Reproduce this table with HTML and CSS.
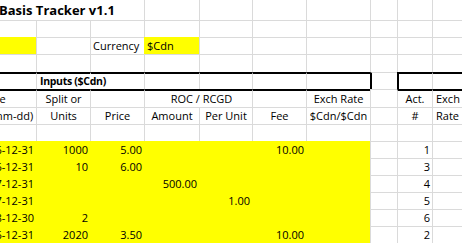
FILE: index.html
```html
<!DOCTYPE html>
<html lang="en">
<head>
<meta charset="utf-8">
<title>Basis Tracker v1.1</title>
<link rel="stylesheet" href="styles.css">
</head>
<body>
<div class="sheet">
  <div class="row h20 first">
    <div class="c title">Basis Tracker v1.1</div>
    <div class="c nl"></div><div class="c nl"></div><div class="c"></div><div class="c"></div><div class="c"></div><div class="c"></div><div class="c"></div><div class="c"></div><div class="c"></div>
  </div>
  <div class="row h17">
    <div class="c"></div><div class="c"></div><div class="c"></div><div class="c"></div><div class="c"></div><div class="c"></div><div class="c"></div><div class="c"></div><div class="c"></div><div class="c"></div>
  </div>
  <div class="row h17">
    <div class="c y"></div><div class="c"></div><div class="c">Currency</div><div class="c y">$Cdn</div><div class="c"></div><div class="c"></div><div class="c"></div><div class="c"></div><div class="c"></div><div class="c"></div>
  </div>
  <div class="row h18">
    <div class="c"></div><div class="c"></div><div class="c"></div><div class="c"></div><div class="c"></div><div class="c"></div><div class="c"></div><div class="c"></div><div class="c"></div><div class="c"></div>
  </div>
  <div class="row h17">
    <div class="c bt"></div><div class="c bt b">Inputs ($Cdn)</div><div class="c bt nl"></div><div class="c bt"></div><div class="c bt"></div><div class="c bt"></div><div class="c bt"></div><div class="c bl"></div><div class="c bt bl"></div><div class="c bt"></div>
  </div>
  <div class="row h18">
    <div class="c bt ctr date">Date</div><div class="c bt ctr">Split or</div><div class="c bt"></div><div class="c bt ctr span2 roc">ROC / RCGD</div><div class="c bt"></div><div class="c bt ctr">Exch Rate</div><div class="c"></div><div class="c bt ctr">Act.</div><div class="c bt jl">Exch Rate</div>
  </div>
  <div class="row h17">
    <div class="c ctr">(yyyy-mm-dd)</div><div class="c ctr">Units</div><div class="c ctr">Price</div><div class="c ctr">Amount</div><div class="c ctr">Per Unit</div><div class="c ctr">Fee</div><div class="c ctr">$Cdn/$Cdn</div><div class="c"></div><div class="c ctr">#</div><div class="c jl">Rate</div>
  </div>
  <div class="row h17">
    <div class="c"></div><div class="c"></div><div class="c"></div><div class="c"></div><div class="c"></div><div class="c"></div><div class="c"></div><div class="c"></div><div class="c"></div><div class="c"></div>
  </div>
  <div class="row h17">
    <div class="c y r">2016-12-31</div><div class="c y r">1000</div><div class="c y r">5.00</div><div class="c y r"></div><div class="c y r"></div><div class="c y r">10.00</div><div class="c y"></div><div class="c"></div><div class="c r">1</div><div class="c"></div>
  </div>
  <div class="row h17">
    <div class="c y r">2016-12-31</div><div class="c y r">10</div><div class="c y r">6.00</div><div class="c y r"></div><div class="c y r"></div><div class="c y r"></div><div class="c y"></div><div class="c"></div><div class="c r">3</div><div class="c"></div>
  </div>
  <div class="row h17">
    <div class="c y r">2017-12-31</div><div class="c y r"></div><div class="c y r"></div><div class="c y r">500.00</div><div class="c y r"></div><div class="c y r"></div><div class="c y"></div><div class="c"></div><div class="c r">4</div><div class="c"></div>
  </div>
  <div class="row h17">
    <div class="c y r">2017-12-31</div><div class="c y r"></div><div class="c y r"></div><div class="c y r"></div><div class="c y r">1.00</div><div class="c y r"></div><div class="c y"></div><div class="c"></div><div class="c r">5</div><div class="c"></div>
  </div>
  <div class="row h17">
    <div class="c y r">2018-12-30</div><div class="c y r">2</div><div class="c y r"></div><div class="c y r"></div><div class="c y r"></div><div class="c y r"></div><div class="c y"></div><div class="c"></div><div class="c r">6</div><div class="c"></div>
  </div>
  <div class="row h17">
    <div class="c y r">2016-12-31</div><div class="c y r">2020</div><div class="c y r">3.50</div><div class="c y r"></div><div class="c y r"></div><div class="c y r">10.00</div><div class="c y"></div><div class="c"></div><div class="c r">2</div><div class="c"></div>
  </div>
</div>
</body>
</html>
```

FILE: styles.css
```css
html, body {
  margin: 0;
  padding: 0;
  background: #fff;
  overflow: hidden;
}
body {
  width: 462px;
  height: 243px;
}
.sheet {
  margin-left: -40px;
  font-family: "Open Sans", "Lato", sans-serif;
  font-size: 11px;
  color: #000;
}
.row {
  display: grid;
  grid-template-columns: 76px 54px 54px 55px 53px 54px 64px 27px 35px 56px;
}
.h17 { height: 17px; }
.h18 { height: 18px; }
.h20 { height: 20px; }
.c {
  box-sizing: border-box;
  border-left: 1px solid #dadada;
  border-top: 1px solid #dadada;
  padding: 0 2px 1px 2px;
  white-space: nowrap;
  display: flex;
  align-items: flex-end;
  line-height: 14px;
  min-width: 0;
}
.first .c { border-top: none; }
.nl { border-left-color: transparent; }
.title {
  font-weight: bold;
  font-size: 13px;
  padding-left: 38px;
  padding-bottom: 2px;
  line-height: 16px;
}
.b {
  font-weight: bold;
  font-size: 10.5px;
  letter-spacing: -0.3px;
  padding-left: 3px;
}
.ctr { justify-content: center; }
.r { justify-content: flex-end; }
.jl { padding-left: 3px; }
.date { padding-right: 12px; }
.y {
  background: #ffff00;
  border-color: #ffff00;
}
.bt { border-top: 2px solid #000; }
.bl { border-left: 2px solid #000; }
.span2 { grid-column: span 2; }
.roc { padding-left: 8px; }
```
